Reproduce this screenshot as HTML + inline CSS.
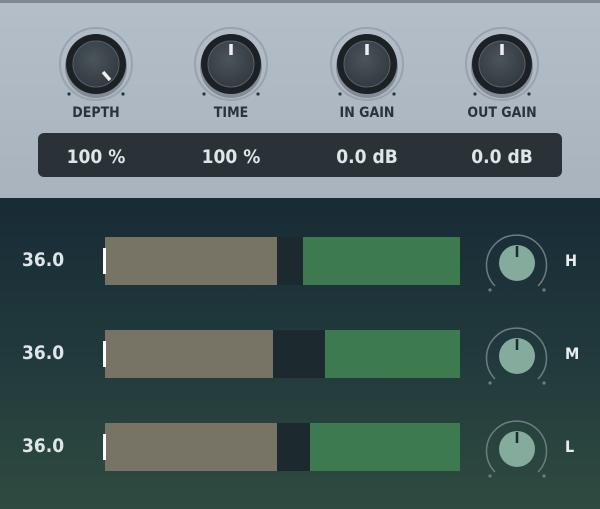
<!DOCTYPE html><html><head><style>
body{margin:0;width:600px;height:509px;overflow:hidden;font-family:"DejaVu Sans Condensed","DejaVu Sans","Liberation Sans",sans-serif;background:#1b2d37}
#top{position:absolute;left:0;top:0;width:600px;height:198px;background:linear-gradient(#b4bec8,#a9b3bd);border-top:3px solid #7d8892;box-sizing:border-box}
#bot{position:absolute;left:0;top:198px;width:600px;height:311px;background:linear-gradient(#182b36,#21393c 50%,#2f4b40)}
.lbl{position:absolute;top:105px;font-weight:bold;font-size:14px;color:#2b333a;transform:translateX(-50%)}
#disp{position:absolute;left:38px;top:133px;width:524px;height:44px;background:#2a3238;border-radius:6px}
.v{position:absolute;top:146px;font-weight:bold;font-size:19px;color:#dfe6ea;transform:translateX(-50%)}
.n{position:absolute;left:22px;font-weight:bold;font-size:19px;color:#dfe6ea}
.b{position:absolute;height:48px}
.r{position:absolute;left:565px;font-weight:bold;font-size:16px;color:#e8eef0}
</style></head><body>
<div id="top"></div><div id="bot"></div>
<svg width="600" height="509" style="position:absolute;left:0;top:0">
<defs><radialGradient id="kg" cx="0.45" cy="0.4" r="0.6"><stop offset="0" stop-color="#4a545b"/><stop offset="1" stop-color="#333b41"/></radialGradient></defs>
<g id="k1">
<circle cx="96" cy="64" r="36" fill="none" stroke="#98a3ad" stroke-width="2"/>
<circle cx="96" cy="67" r="31" fill="#1f2428" opacity=".3"/>
<circle cx="96" cy="64" r="30" fill="#1c2125"/>
<circle cx="96" cy="64" r="23" fill="url(#kg)" stroke="#59626a" stroke-width="1"/>
<circle cx="69" cy="94" r="1.6" fill="#2b333a"/><circle cx="123" cy="94" r="1.6" fill="#2b333a"/>
</g>
<line x1="103" y1="72" x2="110" y2="80" stroke="#eee" stroke-width="3.5"/>
<use href="#k1" x="135"/><line x1="231" y1="44" x2="231" y2="55" stroke="#eee" stroke-width="3.5"/>
<use href="#k1" x="271"/><line x1="367" y1="44" x2="367" y2="55" stroke="#eee" stroke-width="3.5"/>
<use href="#k1" x="406"/><line x1="502" y1="44" x2="502" y2="55" stroke="#eee" stroke-width="3.5"/>
<g id="s1">
<path d="M495 286 A30 30 0 1 1 538 286" fill="none" stroke="#6d7e80" stroke-width="1.5"/>
<circle cx="517" cy="263" r="18" fill="#84ab9b"/>
<line x1="517" y1="246" x2="517" y2="257" stroke="#1d2a2e" stroke-width="2.5"/>
<circle cx="490" cy="290" r="1.6" fill="#6d7e80"/><circle cx="544" cy="290" r="1.6" fill="#6d7e80"/>
</g>
<use href="#s1" y="93"/><use href="#s1" y="186"/>
</svg>
<div class="lbl" style="left:96px">DEPTH</div><div class="lbl" style="left:231px">TIME</div><div class="lbl" style="left:367px">IN GAIN</div><div class="lbl" style="left:502px">OUT GAIN</div>
<div id="disp"></div>
<div class="v" style="left:96px">100 %</div><div class="v" style="left:231px">100 %</div><div class="v" style="left:367px">0.0 dB</div><div class="v" style="left:502px">0.0 dB</div>

<div class="n" style="top:249px">36.0</div><div class="n" style="top:342px">36.0</div><div class="n" style="top:435px">36.0</div>
<div class="b" style="left:105px;top:237px;width:355px;background:#1c2a2f"></div>
<div class="b" style="left:105px;top:237px;width:172px;background:#777466"></div>
<div class="b" style="left:303px;top:237px;width:157px;background:#3d7a50"></div>
<div class="b" style="left:105px;top:330px;width:355px;background:#1c2a2f"></div>
<div class="b" style="left:105px;top:330px;width:168px;background:#777466"></div>
<div class="b" style="left:325px;top:330px;width:135px;background:#3d7a50"></div>
<div class="b" style="left:105px;top:423px;width:355px;background:#1c2a2f"></div>
<div class="b" style="left:105px;top:423px;width:172px;background:#777466"></div>
<div class="b" style="left:310px;top:423px;width:150px;background:#3d7a50"></div>
<div style="position:absolute;left:103px;top:248px;width:3px;height:26px;background:#fff"></div>
<div style="position:absolute;left:103px;top:341px;width:3px;height:26px;background:#fff"></div>
<div style="position:absolute;left:103px;top:434px;width:3px;height:26px;background:#fff"></div>
<div class="r" style="top:251px">H</div><div class="r" style="top:344px">M</div><div class="r" style="top:437px">L</div>
</body></html>
